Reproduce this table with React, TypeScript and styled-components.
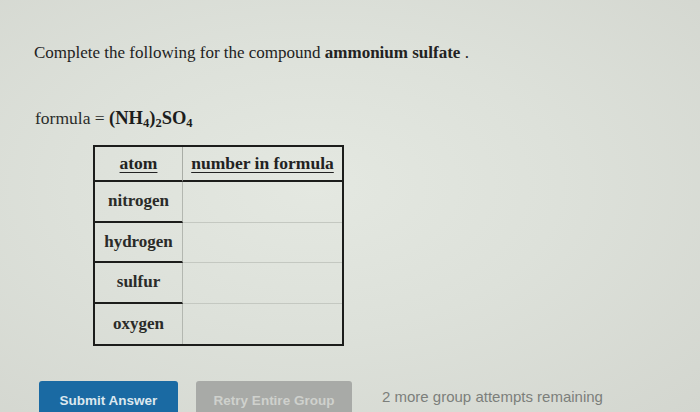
import React from "react";
import styled, { createGlobalStyle } from "styled-components";

const Global = createGlobalStyle`
  html, body { margin: 0; padding: 0; }
  body {
    width: 700px;
    height: 412px;
    overflow: hidden;
    background: radial-gradient(ellipse at 45% 45%, #e4e8e1 0%, #dde1da 45%, #d3d6cf 100%);
  }
`;

const Page = styled.div`
  width: 700px;
  height: 412px;
  box-sizing: border-box;
  padding: 42px 0 0 34px;
  font-family: "Liberation Serif", "Times New Roman", serif;
  color: #1f211f;
  display: flex;
  flex-direction: column;
`;

const Prompt = styled.p`
  margin: 0;
  font-size: 17px;
  line-height: 22px;
  color: #222;
`;

const Formula = styled.p`
  margin: 43px 0 0 1px;
  font-size: 17.5px;
  line-height: 22px;
  color: #2a2c2a;
  b { font-weight: 700; font-size: 18.5px; color: #1c1d1c; }
  sub { font-size: 12.5px; vertical-align: -3px; line-height: 0; }
`;

const Table = styled.div`
  margin: 16px 0 0 59px;
  width: 251px;
  box-sizing: border-box;
  border: 2px solid #1c1d1b;
  display: grid;
  grid-template-columns: 88px 1fr;
  grid-template-rows: 35px repeat(4, 40.5px);
`;

const HeadCell = styled.div<{ $first?: boolean }>`
  display: flex;
  align-items: center;
  justify-content: center;
  border-bottom: 2px solid #1c1d1b;
  border-right: ${(p) => (p.$first ? "1px solid #a9ada6" : "none")};
  font-weight: 700;
  font-size: 17.5px;
  text-decoration: underline;
  text-underline-offset: 3px;
  color: #222;
`;

const AtomCell = styled.div<{ $last?: boolean }>`
  display: flex;
  align-items: center;
  justify-content: center;
  border-bottom: ${(p) => (p.$last ? "none" : "2px solid #1c1d1b")};
  border-right: 1px solid #b3b7b0;
  font-weight: 700;
  font-size: 17px;
  color: #2a2b29;
`;

const InputCell = styled.div<{ $last?: boolean }>`
  border-bottom: ${(p) => (p.$last ? "none" : "1px solid #c4c8c1")};
`;

const Actions = styled.div`
  margin: 35px 0 0 5px;
  display: flex;
  align-items: flex-start;
  gap: 18px;
  font-family: "Liberation Sans", Arial, sans-serif;
`;

const Button = styled.div<{ $primary?: boolean }>`
  height: 38px;
  width: ${(p) => (p.$primary ? "139px" : "156px")};
  box-sizing: border-box;
  border-radius: 3px;
  display: flex;
  align-items: center;
  justify-content: center;
  font-weight: 700;
  font-size: 13.5px;
  background: ${(p) => (p.$primary ? "#1a6aa3" : "#a8aaa7")};
  color: ${(p) => (p.$primary ? "#dce8ef" : "#cfd1cd")};
`;

const Remaining = styled.span`
  margin: 7px 0 0 12px;
  font-size: 15px;
  line-height: 18px;
  color: #7c7f7b;
`;

const atoms = ["nitrogen", "hydrogen", "sulfur", "oxygen"];

export default function App() {
  return (
    <>
      <Global />
      <Page>
        <Prompt>
          Complete the following for the compound <b>ammonium sulfate</b> .
        </Prompt>
        <Formula>
          formula = <b>(NH<sub>4</sub>)<sub>2</sub>SO<sub>4</sub></b>
        </Formula>
        <Table>
          <HeadCell $first>atom</HeadCell>
          <HeadCell>number in formula</HeadCell>
          {atoms.map((a, i) => (
            <React.Fragment key={a}>
              <AtomCell $last={i === atoms.length - 1}>{a}</AtomCell>
              <InputCell $last={i === atoms.length - 1} />
            </React.Fragment>
          ))}
        </Table>
        <Actions>
          <Button $primary>Submit Answer</Button>
          <Button>Retry Entire Group</Button>
          <Remaining>2 more group attempts remaining</Remaining>
        </Actions>
      </Page>
    </>
  );
}
